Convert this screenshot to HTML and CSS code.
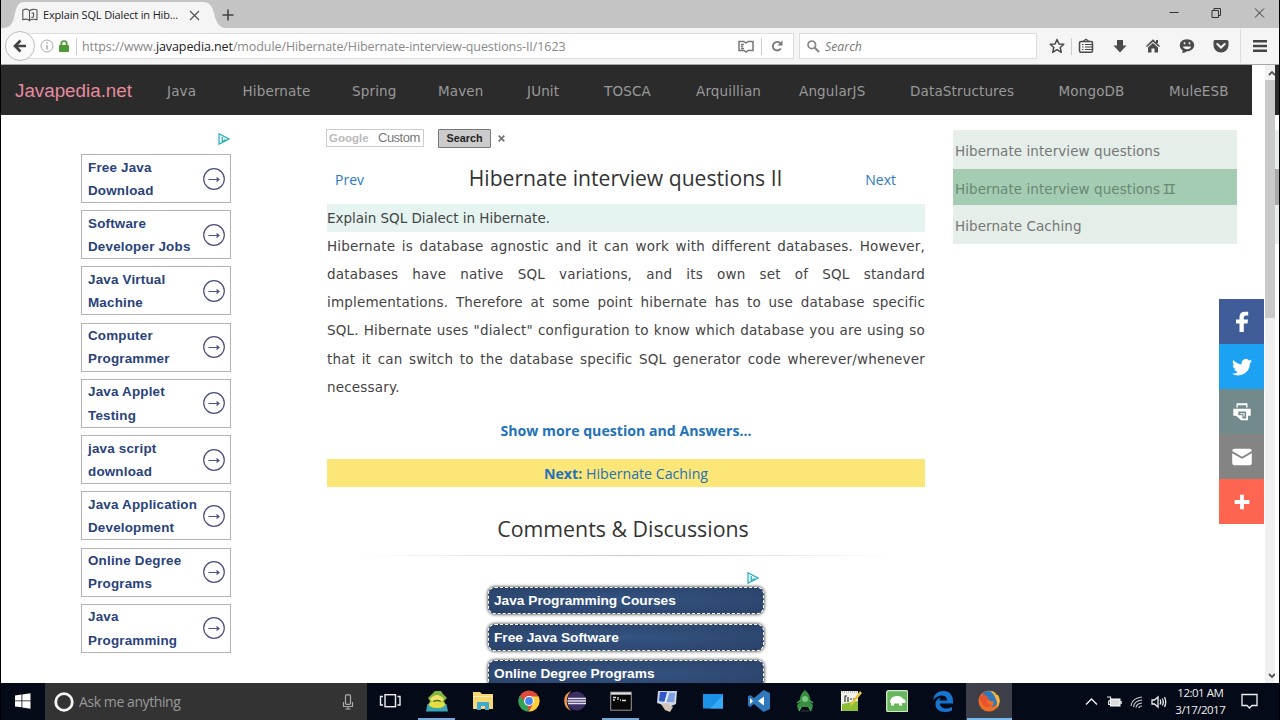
FILE: index.html
```html
<!DOCTYPE html>
<html lang="en">
<head>
<meta charset="utf-8">
<title>Hibernate interview questions II</title>
<link rel="stylesheet" href="styles.css">
</head>
<body>
<div class="screen">
  <header class="tabbar">
    <svg class="tab-shape" width="226" height="29" viewBox="0 0 226 29"><path d="M0 28C10 28 11 22 13 13C15 5 17 2 23 2H200C208 2 210 6 212 13C214 22 217 28 224 28V29H0Z" fill="#f5f5f5"/></svg>
    <div class="tab">
      <svg width="16" height="14" viewBox="0 0 16 14" fill="none" stroke="#555" stroke-width="1.1"><path d="M7.5 12.5C6 11 3 11 .8 11.6V2C3 1 6 1 7.5 2.8C9 1 13 1 15 2V11.6C12 11 9 11 7.5 12.500V3M9.500 5H11.500V8.500Q10.500 10 9.500 9"/></svg>
      <span class="tab-title">Explain SQL Dialect in Hib...</span>
      <svg width="11" height="11" viewBox="0 0 11 11" stroke="#555" stroke-width="1.2"><path d="M1 1L10 10M10 1L1 10"/></svg>
    </div>
    <svg class="newtab" width="12" height="12" viewBox="0 0 12 12" stroke="#444" stroke-width="1.6"><path d="M6 .5V11.500M.5 6H11.500"/></svg>
    <div class="winbtns">
      <svg width="10" height="12" viewBox="0 0 10 12" stroke="#333" fill="none"><path d="M.5 5.500H9.500"/></svg>
      <svg width="11" height="12" viewBox="0 0 11 12" stroke="#333" fill="none"><path d="M1 3.500H7.500V10.500H1ZM3 3.500V1.500H9.500V8.500H7.500"/></svg>
      <svg width="11" height="12" viewBox="0 0 11 12" stroke="#333" fill="none"><path d="M1 1.500L10 10.500M10 1.500L1 10.500"/></svg>
    </div>
  </header>

  <div class="toolbar">
    <div class="back"><svg width="14" height="14" viewBox="0 0 14 14" fill="none" stroke="#444" stroke-width="2.7"><path d="M7.500 1.500L2 7L7.500 12.500M2.500 7H13"/></svg></div>
    <div class="urlbox">
      <svg width="14" height="14" viewBox="0 0 14 14" fill="none" stroke="#aaa"><circle cx="7" cy="7" r="6"/><path d="M7 6V10.500M7 3.300V4.700" stroke-width="1.500"/></svg>
      <svg class="lock" width="10" height="12" viewBox="0 0 10 12"><path d="M2.300 6V3.500Q2.300 1 5 1T7.700 3.500V6" fill="none" stroke="#4a9a30" stroke-width="1.700"/><rect y="5" width="10" height="7" rx="1" fill="#4a9a30"/></svg>
      <i class="vsep"></i>
      <span class="url">https://www.<b>javapedia.net</b>/module/Hibernate/Hibernate-interview-questions-II/1623</span>
      <svg class="reader" width="16" height="13" viewBox="0 0 16 13" fill="none" stroke="#777" stroke-width="1.500"><path d="M1 1.500H6L8 3L10 1.500H15V10.500H10L8 12L6 10.500H1ZM3 4.500H6M3 6.500H5M3 8.500H6" /></svg>
      <i class="vsep"></i>
      <svg class="reload" width="12" height="12" viewBox="0 0 12 12"><path d="M9.500 3.500A4.300 4.300 0 1 0 9.800 8.500" fill="none" stroke="#777" stroke-width="1.800"/><path d="M11.500 .5V5.500H6.500Z" fill="#777"/></svg>
    </div>
    <div class="searchbox">
      <svg width="13" height="13" viewBox="0 0 13 13" fill="none" stroke="#888"><circle cx="4.800" cy="4.800" r="3.800" stroke-width="1.700"/><path d="M7.500 7.500L12 12" stroke-width="2.200"/></svg>
      <span>Search</span>
    </div>
    <div class="tools">
      <svg viewBox="0 0 16 16" fill="none" stroke="#4a4a4a" stroke-width="1.500" stroke-linejoin="round"><path d="M8 1.500L10 6L14.800 6.300L11.200 9.500L12.300 14.300L8 11.700L3.700 14.300L4.800 9.500L1.200 6.300L6 6Z"/></svg>
      <i class="vsep"></i>
      <svg class="list" viewBox="0 0 16 16" fill="none" stroke="#4a4a4a" stroke-width="1.500"><rect x="1.500" y="3.500" width="13" height="10.700" rx="1.500"/><path d="M5.500 3L8 1.300L10.500 3M4 6.500H5.500M7 6.500H14M4 9H5.500M7 9H14M4 11.500H5.500M7 11.500H14" stroke-width="1.200"/></svg>
      <svg viewBox="0 0 16 16" fill="#4a4a4a"><path d="M5 2H11V7.500H14.500L8 14.500L1.500 7.500H5Z"/></svg>
      <svg viewBox="0 0 16 16" fill="#4a4a4a"><path d="M8 1.200L15 8L14 9L8 3.700L2 9L1 8ZM8 5L13 9.500V14.500H9.500V10.500H6.500V14.500H3V9.500ZM11 2H13V5H11Z"/></svg>
      <svg viewBox="0 0 16 16"><path d="M8 1.200C12.500 1.200 15.200 4 15.200 7.300S12 13.300 8 13.300Q6 15 3 15Q4 13.500 3.500 12.300C1.800 11.200 .8 9.500 .8 7.300C.8 4 3.500 1.200 8 1.200Z" fill="#4a4a4a"/><path d="M4 8.500H12Q11.500 11.300 8 11.300T4 8.500" fill="#f5f5f5"/><path d="M5.500 4.300V6.300M10.500 4.300V6.300" stroke="#f5f5f5" stroke-width="1.500"/></svg>
      <svg viewBox="0 0 16 16"><path d="M2 2H14Q15.500 2 15.500 3.500V7C15.500 11.500 12 14.500 8 14.500S.5 11.500.5 7V3.500Q.5 2 2 2Z" fill="#4a4a4a"/><path d="M4.300 6L8 9.500L11.700 6" fill="none" stroke="#f5f5f5" stroke-width="2" stroke-linecap="round"/></svg>
      <i class="vsep tall"></i>
      <svg viewBox="0 0 16 16" stroke="#444" stroke-width="2.500"><path d="M1 3.200H15M1 8H15M1 12.800H15"/></svg>
    </div>
  </div>

  <div class="viewport">
    <div class="page">
      <nav class="nav">
        <span class="brand">Javapedia.net</span>
        <span>Java</span><span>Hibernate</span><span>Spring</span><span>Maven</span><span>JUnit</span><span>TOSCA</span><span>Arquillian</span><span>AngularJS</span><span>DataStructures</span><span>MongoDB</span><span>MuleESB</span>
      </nav>
      <div class="columns">
        <aside class="ads">
          <svg class="choice" width="12" height="12" viewBox="0 0 12 12" fill="#e6fafd" stroke="#28aebc" stroke-width="1.200"><path d="M1 .8L11 6L1 11.200ZM4.300 4V9L7.500 6.500"/></svg>
          <div class="ad"><p>Free Java<br>Download</p><svg class="go" viewBox="0 0 22 22"><circle cx="11" cy="11" r="10.300"/><path d="M5.500 11.500H16M13.500 9.500L16 11.500L13.500 13.500"/></svg></div>
          <div class="ad"><p>Software<br>Developer Jobs</p><svg class="go" viewBox="0 0 22 22"><circle cx="11" cy="11" r="10.300"/><path d="M5.500 11.500H16M13.500 9.500L16 11.500L13.500 13.500"/></svg></div>
          <div class="ad"><p>Java Virtual<br>Machine</p><svg class="go" viewBox="0 0 22 22"><circle cx="11" cy="11" r="10.300"/><path d="M5.500 11.500H16M13.500 9.500L16 11.500L13.500 13.500"/></svg></div>
          <div class="ad"><p>Computer<br>Programmer</p><svg class="go" viewBox="0 0 22 22"><circle cx="11" cy="11" r="10.300"/><path d="M5.500 11.500H16M13.500 9.500L16 11.500L13.500 13.500"/></svg></div>
          <div class="ad"><p>Java Applet<br>Testing</p><svg class="go" viewBox="0 0 22 22"><circle cx="11" cy="11" r="10.300"/><path d="M5.500 11.500H16M13.500 9.500L16 11.500L13.500 13.500"/></svg></div>
          <div class="ad"><p>java script<br>download</p><svg class="go" viewBox="0 0 22 22"><circle cx="11" cy="11" r="10.300"/><path d="M5.500 11.500H16M13.500 9.500L16 11.500L13.500 13.500"/></svg></div>
          <div class="ad"><p>Java Application<br>Development</p><svg class="go" viewBox="0 0 22 22"><circle cx="11" cy="11" r="10.300"/><path d="M5.500 11.500H16M13.500 9.500L16 11.500L13.500 13.500"/></svg></div>
          <div class="ad"><p>Online Degree<br>Programs</p><svg class="go" viewBox="0 0 22 22"><circle cx="11" cy="11" r="10.300"/><path d="M5.500 11.500H16M13.500 9.500L16 11.500L13.500 13.500"/></svg></div>
          <div class="ad"><p>Java<br>Programming</p><svg class="go" viewBox="0 0 22 22"><circle cx="11" cy="11" r="10.300"/><path d="M5.500 11.500H16M13.500 9.500L16 11.500L13.500 13.500"/></svg></div>
        </aside>
        <main class="article">
          <div class="gsearch">
            <div class="ginput"><b>Google</b><span>Custom</span></div>
            <span class="gbtn">Search</span>
            <svg width="7" height="7" viewBox="0 0 7 7" stroke="#777" stroke-width="1.800"><path d="M.7 .7L6.300 6.300M6.300 .7L.7 6.300"/></svg>
          </div>
          <div class="heading"><a>Prev</a><h1>Hibernate interview questions II</h1><a>Next</a></div>
          <div class="question">Explain SQL Dialect in Hibernate.</div>
          <div class="answer">
            <div>Hibernate is database agnostic and it can work with different databases. However,</div>
            <div>databases have native SQL variations, and its own set of SQL standard</div>
            <div>implementations. Therefore at some point hibernate has to use database specific</div>
            <div>SQL. Hibernate uses "dialect" configuration to know which database you are using so</div>
            <div>that it can switch to the database specific SQL generator code wherever/whenever</div>
            <div class="last">necessary.</div>
          </div>
          <div class="more">Show more question and Answers...</div>
          <div class="next"><b>Next:</b> Hibernate Caching</div>
          <h2>Comments &amp; Discussions</h2>
          <div class="rule"></div>
          <div class="links">
            <svg class="choice" width="12" height="12" viewBox="0 0 12 12" fill="#e6fafd" stroke="#28aebc" stroke-width="1.200"><path d="M1 .8L11 6L1 11.200ZM4.300 4V9L7.500 6.500"/></svg>
            <div class="pill"><span>Java Programming Courses</span></div>
            <div class="pill"><span>Free Java Software</span></div>
            <div class="pill"><span>Online Degree Programs</span></div>
          </div>
        </main>
        <aside class="topics">
          <p>Hibernate interview questions</p>
          <p class="current">Hibernate interview questions <span class="numeral">II</span></p>
          <p>Hibernate Caching</p>
        </aside>
      </div>
    </div>
    <div class="scroll">
      <svg width="10" height="15" viewBox="0 0 10 15" fill="none" stroke="#555" stroke-width="1.800"><path d="M4 10L7 7L10 10"/></svg>
      <div class="thumb"></div>
      <svg width="10" height="15" viewBox="0 0 10 15" fill="none" stroke="#555" stroke-width="1.800"><path d="M4 6L7 9L10 6"/></svg>
    </div>
    <div class="edge"><i class="e-nav"></i><i class="e-a"></i><i class="e-b"></i><i class="e-a"></i></div>
    <div class="share">
      <div class="fb"><svg viewBox="0 0 24 24" fill="#fff"><path d="M9.500 22V13.500H6V9.500H9.500V7Q9.500 1.800 15 1.800H18.200V5.500H16Q13.800 5.500 13.800 7.500V9.500H18L17.500 13.500H13.800V22Z"/></svg></div>
      <div class="tw"><svg viewBox="0 0 24 24" fill="#fff"><path d="M23 5.500Q22 6 20.700 6.200Q22 5.300 22.500 3.800Q21.200 4.600 19.600 4.900A4.500 4.500 0 0 0 11.800 9Q6 8.700 2.500 4.300Q.8 7.500 3.900 10.300Q2.800 10.200 1.900 9.700Q2 13.200 5.500 14.200Q4.500 14.500 3.400 14.200Q4.400 17.200 7.700 17.400Q4.800 19.600 1 19.300Q4.200 21.200 7.900 21.200C16 21.200 20.800 14.500 20.600 8Q22.200 6.900 23 5.500Z"/></svg></div>
      <div class="pr"><svg viewBox="0 0 24 24"><path d="M6 2.500H18V7H6ZM2.500 8.500H21.500V16H18.500V21H11L5.500 16H2.500Z" fill="#fff"/><path d="M7.500 4.500H16.500V7.500H7.500ZM8 11.500H16.500V19H12.500V15.500H8Z" fill="#738a8d"/><path d="M10 13H15V17H13.500V14.500H10Z" fill="#d5dcdd"/></svg></div>
      <div class="em"><svg viewBox="0 0 24 24" fill="#fff"><path d="M3.500 3H20.500Q22.500 3 22.700 5.500L12 11.800L1.300 5.500Q1.500 3 3.500 3ZM1.300 8L12 14L22.700 8V18.500Q22.500 21 20.500 21H3.500Q1.500 21 1.300 18.500Z"/></svg></div>
      <div class="pl"><svg viewBox="0 0 24 24" stroke="#fff" stroke-width="4.200"><path d="M12 4V20M4 12H20"/></svg></div>
    </div>
  </div>

  <footer class="taskbar">
    <div class="start"><svg width="16" height="16" viewBox="0 0 16 16" fill="#fff"><path d="M0 2.400L6.500 1.500V7.500H0ZM7.300 1.400L15.500 .2V7.500H7.300ZM0 8.300H6.500V14.300L0 13.400ZM7.300 8.300H15.500V15.700L7.300 14.500Z"/></svg></div>
    <div class="cortana">
      <svg width="20" height="20" viewBox="0 0 20 20" fill="none" stroke="#f4f4f4" stroke-width="2.800"><circle cx="10" cy="10" r="8.300"/></svg>
      <span>Ask me anything</span>
      <svg width="12" height="16" viewBox="0 0 12 16" fill="none" stroke="#aaa" stroke-width="1.200"><rect x="3.500" y=".8" width="5" height="9.500" rx="1"/><path d="M1.500 8V12.500H10.500V8M6 12.500V15M3.500 15H8.500"/></svg>
    </div>
    <div class="apps">
      <div><svg viewBox="0 0 22 22" fill="none" stroke="#eee" stroke-width="1.400"><rect x="6" y="4.700" width="10.500" height="12"/><path d="M4 6.500H1.500V15H4M18.500 6.500H21V15H18.500"/></svg></div>
      <div class="open"><svg viewBox="0 0 22 22"><path d="M0 21.500L1.500 14H20.500L22 21.500Z" fill="#3aa5b5"/><path d="M2 8L6 4L9 1H15L17 4L21 8L18 11L20 15L15 18H7L2 15L4 11Z" fill="#7fb640"/><path d="M4 9Q11 1 18 9L16 12Q11 10 6 12Z" fill="#f0e269"/><ellipse cx="11" cy="14.500" rx="8" ry="3.500" fill="#e6dc45"/><path d="M7 11.500Q11 9.500 15 11.500" fill="none" stroke="#4f7b28" stroke-width="1.300"/></svg></div>
      <div><svg viewBox="0 0 22 22"><path d="M1 2H8L10 4H21V19H1Z" fill="#f8d775"/><path d="M1 6H21V7H1Z" fill="#fff0aa"/><path d="M5 20V13Q5 12 6 12H16Q17 12 17 13V20H13V16H9V20Z" fill="#3fa9d0"/></svg></div>
      <div><svg viewBox="0 0 22 22"><circle cx="11" cy="11" r="10.500" fill="#e04a3a"/><path d="M2 5.500L8.500 15L11.500 21.500A10.500 10.500 0 0 1 2 5.500Z" fill="#2fa457"/><path d="M11 6.500H20.500A10.500 10.500 0 0 1 11 21.500L15.500 13Z" fill="#fbd03b"/><circle cx="11" cy="11" r="5" fill="#fff"/><circle cx="11" cy="11" r="3.900" fill="#4188ec"/></svg></div>
      <div><svg viewBox="0 0 22 22"><path d="M7.500 1A10.500 10.500 0 0 0 7.500 21A13 13 0 0 1 7.500 1Z" fill="#eb9a4a"/><circle cx="12.500" cy="11" r="9.500" fill="#3c2f62"/><path d="M4 8.500H22M3.500 11H22M4 13.500H22" stroke="#e4e0ef" stroke-width="1.500"/></svg></div>
      <div class="open"><svg viewBox="0 0 22 22"><rect x=".7" y="2.200" width="20.600" height="18" fill="#080808" stroke="#999"/><path d="M1 3.500H21" stroke="#ddd" stroke-width="2.400"/><path d="M3 7.500H6M3 10H5M8 7V10M10 10H11M12 10.500H16" stroke="#ddd" stroke-width="1.300"/></svg></div>
      <div><svg viewBox="0 0 22 22"><path d="M2 1L21 1L20 14L13 17L1 13Z" fill="#cbd4e5"/><path d="M4 2L11 2L10 12L3 11Z" fill="#3357c7"/><path d="M13 3H19L18 12H10Z" fill="#7f9fe4"/><path d="M11 3H13L10 13H8Z" fill="#eef"/><path d="M5 14L10 13L17 17L14 22L9 20Z" fill="#d3c4b6"/></svg></div>
      <div><svg viewBox="0 0 22 22"><rect x="1" y="4" width="20" height="14.500" fill="#1c91e8"/><path d="M8 18.500L21 5V18.500Z" fill="#35aaf5"/></svg></div>
      <div><svg viewBox="0 0 22 22"><path d="M15.500 0L22 3V19L15.500 22L6 14L2 17L0 15.500V6.500L2 5L6 8Z" fill="#2f78bd"/><path d="M2 8V14L5 11ZM16 6.500V15.500L10 11Z" fill="#fff"/></svg></div>
      <div><svg viewBox="0 0 22 22"><path d="M11 0Q17 5 16 12L19 15L18 20L14 17H8L4 20L3 15L6 12Q5 5 11 0Z" fill="#388e42"/><path d="M3 13L7 10M15 10L19 13M7 17L5 21M15 17L17 21" stroke="#4ca958" stroke-width="1.500"/><circle cx="11" cy="9" r="3" fill="#79c77e"/><path d="M7 21H15" stroke="#3b3b3b"/></svg></div>
      <div><svg viewBox="0 0 22 22"><path d="M1 1H18V21H1Z" fill="#f1f1e8"/><path d="M2 14L18 11V21H2Z" fill="#8bbf36"/><path d="M2 2H17" stroke="#999" stroke-dasharray="1 1"/><path d="M5 12V6H7M8 7V12M10 9H12M13 9H15" stroke="#333" stroke-width="1.200" fill="none"/><path d="M20 1L11 13L10 17L13 14L22 3Z" fill="#e9c243"/></svg></div>
      <div><svg viewBox="0 0 22 22"><rect x=".7" y=".7" width="21" height="21" rx="1.500" fill="#68b75e" stroke="#cde9c7" stroke-width="1.300"/><path d="M4 13Q4 6 11 6Q16 6 17 9Q20 9 19.500 13H16V15.500H13V13.500H8V15.500H5V13Z" fill="#fff"/></svg></div>
      <div><svg viewBox="0 0 22 22"><path d="M1 10C2 4 6 1 11.500 1C18 1 21 6 21 11V13.500H8C8 17 11 18.500 14 18.500Q17 18.500 20 17V20.500Q17 22 13 22C7 22 3.500 18.500 3.500 14C3.500 10.500 6 8.500 9 7.500Q7.500 9 7.500 10.500H15Q15 6 10.500 5.500Q5 5.300 1 10Z" fill="#1675cf"/></svg></div>
      <div class="open active"><svg viewBox="0 0 22 22"><circle cx="11" cy="11" r="10.500" fill="#ee7024"/><path d="M4 4Q9 -1 15 1.500Q21 5 19.500 12Q18 17 13 17Q17 14 15 11Q12 12 10 9Q10 6 7 6Z" fill="#2e79bd"/><path d="M12 1Q17 1 18 5L20 5Q24 12 19 18Q20 12 17 7Q15 3 12 1Z" fill="#f8b63a"/><path d="M2 5L4 6L7 4L8 7L11 9L9 11Q9 15 14 14Q11 19 6 16Q1 12 2 5Z" fill="#e8532d"/></svg></div>
    </div>
    <div class="tray">
      <svg width="13" height="14" viewBox="0 0 13 14" fill="none" stroke="#eee" stroke-width="1.400"><path d="M1 9.500L6.500 4L12 9.500"/></svg>
      <svg width="16" height="14" viewBox="0 0 16 14"><rect x="4.500" y="4" width="9.500" height="7" fill="#ddd" stroke="#fff"/><path d="M15 6V9" stroke="#eee" stroke-width="1.500"/><path d="M1 2H4.500V4.500Q4 6 2.700 6.200V9.500H4" fill="none" stroke="#eee" stroke-width="1.200"/></svg>
      <svg width="13" height="14" viewBox="0 0 13 14" fill="none" stroke="#ccc" stroke-width="1.200"><path d="M1 11Q2 3 12 2M3.500 12Q4 6 12 5M6 12.500Q6.500 8.500 12 8M9 13Q9 11 12 11"/></svg>
      <svg width="16" height="14" viewBox="0 0 16 14" fill="none" stroke="#eee" stroke-width="1.300"><path d="M1 5H3.500L7 2V12L3.500 9H1ZM9 4.500Q10.500 7 9 9.500M11.300 3.500Q13.300 7 11.300 10.500M13.500 2Q16 7 13.500 12"/></svg>
      <div class="clock"><span>12:01 AM</span><span>3/17/2017</span></div>
      <svg width="17" height="17" viewBox="0 0 17 17" fill="none" stroke="#eee" stroke-width="1.300"><path d="M1 1.500H16V12.500H11L8.500 15L6 12.500H1Z"/></svg>
    </div>
  </footer>
</div>
</body>
</html>
```
FILE: styles.css
```css
* { box-sizing: border-box; }
body { margin: 0; background: #000; }
h1, h2, p { margin: 0; font-weight: 400; }
svg { display: block; flex: none; }
.screen {
  width: 1280px; height: 720px; overflow: hidden;
  display: grid; grid-template-rows: 28px 37px 618px 37px;
  border-left: 1px solid #000; border-right: 1px solid #000;
  white-space: nowrap; background: #fff;
}

/* browser chrome */
.tabbar { position: relative; display: flex; align-items: center; background: #c4c4c4; padding-left: 21px; font: 11px/14px "Open Sans", sans-serif; }
.tab-shape { position: absolute; left: 1px; top: 0; }
.tab { position: relative; display: flex; align-items: center; width: 178px; padding-top: 2px; }
.tab-title { width: 147px; padding-left: 5px; color: #222; letter-spacing: -.16px; }
.tab svg:last-child { margin-left: 5px; }
.newtab { position: relative; margin: 2px 0 0 22px; }
.winbtns { display: flex; gap: 32px; margin: -2px 0 0 auto; padding-right: 15px; }
.tabbar .winbtns { padding-right: 15px; margin-right: 6.500px; }
.toolbar { display: flex; align-items: center; background: #f5f5f5; border-bottom: 1px solid #a8a8a8; font: 12.5px/16px "Open Sans", sans-serif; }
.back { display: flex; align-items: center; justify-content: center; width: 30px; height: 30px; margin: -1px 0 0 4px; border: 1px solid #bbb; border-radius: 50%; background: #fbfbfb; position: relative; z-index: 1; }
.urlbox, .searchbox { display: flex; align-items: center; height: 26px; background: #fff; border: 1px solid #ddd; }
.urlbox { width: 768px; margin-left: -9px; padding-left: 13px; }
.lock { margin-left: 5px; }
.vsep { width: 1px; height: 17px; background: #ccc; }
.urlbox .vsep { margin-left: 7px; }
.url { width: 661px; padding-left: 5px; color: #888; letter-spacing: -.09px; padding-top: 2px; }
.url b { font-weight: 400; color: #222; }
.reload { margin-left: 9px; }
.searchbox { width: 238px; margin-left: 5px; padding-left: 7px; gap: 5px; color: #777; font-style: italic; font-size: 12.3px; }
.searchbox span { padding-top: 2px; }
.tools { display: flex; align-items: center; margin-left: 12px; }
.tools svg { width: 16px; height: 16px; margin-right: 17.700px; }
.tools svg:first-child { margin-right: 6px; }
.tools .vsep { margin-right: 6px; }
.tools .tall { height: 34px; margin: 0 11px 0 -6px; background: #ddd; }

/* page */
.viewport { position: relative; display: grid; grid-template-columns: 1264px 10px 4px; overflow: hidden; }
.page { height: 618px; overflow: hidden; }
.nav {
  display: grid; width: 1251px; height: 50px; align-items: center; background: #2b2b2c; color: #999;
  grid-template-columns: 152px 75.500px 109.500px 86px 89px 77px 92px 103px 111px 148.500px 110.500px auto;
  padding: 1px 0 0 14px; font: 13.500px/20px "DejaVu Sans", sans-serif; letter-spacing: .15px;
}
.brand { color: #e58a9d; font: 18.800px/24px "Liberation Sans", sans-serif; letter-spacing: 0; }
.columns { display: grid; grid-template-columns: 150px 96px 598px 28px 284px; padding-left: 80px; }
.ads { grid-column: 1; padding-top: 18px; }
.article { grid-column: 3; padding-top: 13px; }
.topics { grid-column: 5; padding-top: 15px; }
.ads .choice { margin: 0 1px 9px auto; }
.ad { display: flex; align-items: center; justify-content: space-between; height: 49px; margin-bottom: 7.220px; padding: 0 5px 0 6px; border: 1px solid #b3b3b3; }
.ad p { font: bold 13.400px/23.300px "Liberation Sans", sans-serif; letter-spacing: .2px; color: #29427a; padding-top: .6px; }
.go { width: 22px; height: 22px; fill: none; stroke: #4b4f80; stroke-width: 1.200; }

.gsearch { display: flex; align-items: center; height: 20px; margin-left: -1px; }
.ginput { display: flex; align-items: center; width: 98px; height: 18px; padding-left: 2px; border: 1px solid #ccc; font: 13px/16px "Liberation Sans", sans-serif; color: #777; }
.ginput b { width: 49px; font: bold 11.500px/16px "Liberation Sans", sans-serif; color: #bbb; }
.ginput span { letter-spacing: -.5px; }
.gbtn { width: 53px; height: 19px; margin: 0 7px 0 14px; border: 1px solid #777; border-radius: 1px; background: #ccc; font: bold 10.800px/17px "Liberation Sans", sans-serif; text-align: center; color: #222; }
.heading { display: flex; justify-content: space-between; align-items: center; height: 56px; padding: 7px 29px 0 8px; font: 14px/20px "Open Sans", sans-serif; color: #2a7abf; }
.heading h1 { font: 21.150px/28px "Open Sans", sans-serif; color: #333; padding-left: 22px; margin-top: -4px; }
.question, .answer { font: 13.500px/28px "DejaVu Sans", sans-serif; color: #444; }
.question { background: #e5f4f1; letter-spacing: -.02px; }
.answer { letter-spacing: .18px; }
.answer div { height: 28.150px; text-align-last: justify; }
.answer .last { text-align-last: left; }
.more { margin-top: 16px; text-align: center; font: bold 14.150px/28px "Open Sans", sans-serif; color: #2372b9; }
.next { margin-top: 14.300px; height: 28px; background: #fde678; text-align: center; font: 14.200px/30px "Open Sans", sans-serif; color: #2372b9; }
h2 { margin-top: 26px; padding-right: 6px; text-align: center; font: 21.350px/31px "Open Sans", sans-serif; color: #333; margin-bottom: 11px; }
.rule { height: 1px; background: linear-gradient(90deg, #fff 5%, #ccc 50%, #fff 95%); }
.links { width: 276px; margin: 16px 0 0 161px; }
.links .choice { margin: 0 5px 3px auto; }
.pill { height: 27px; margin-bottom: 9.500px; padding: 0 5px; border: 1px dashed #fff; border-radius: 7px; background: radial-gradient(#345482, #2a4269); box-shadow: 0 0 3px 1px #777; color: #fff; font: bold 13.700px/25px "Liberation Sans", sans-serif; }
.topics { font: 13.500px/20px "DejaVu Sans", sans-serif; letter-spacing: .07px; color: #777; }
.topics p { height: 39px; padding: 11px 2px 0; background: #e5eee8; }
.topics .current { height: 36px; padding-top: 10px; background: #a4ccb2; color: #688875; }
.numeral { font-family: "DejaVu Sans Mono", monospace; letter-spacing: -2.500px; margin-left: -2px; }
.scroll { display: flex; flex-direction: column; background: #f0f0f0; }
.thumb { height: 238px; margin-bottom: auto; background: #c9c9c9; }
.edge { background: #fff; }
.edge i { display: block; }
.e-nav { height: 50px; background: #2b2b2c; margin-bottom: 15px; }
.e-a { height: 39px; background: #e8ecea; }
.e-b { height: 36px; background: #aaa; }
.share { position: absolute; left: 1218px; top: 234px; }
.share div { display: flex; align-items: center; justify-content: center; width: 45px; height: 45px; }
.share svg { width: 22px; height: 22px; }
.fb { background: #3f5b98; }
.tw { background: #1da1f2; }
.pr { background: #738a8d; }
.em { background: #848484; }
.pl { background: #ff6550; }
.share .fb svg { width: 24px; height: 24px; }
.share .em svg { width: 24px; height: 22px; }

/* taskbar */
.taskbar { display: flex; background: #050a18; color: #eee; }
.start { display: flex; align-items: center; justify-content: center; width: 44px; padding-bottom: 1px; }
.cortana { display: flex; align-items: center; width: 322px; padding-left: 9px; background: #333; color: #999; font: 14px/20px "Open Sans", sans-serif; }
.cortana span { width: 268px; padding-left: 5px; letter-spacing: -.42px; }
.apps { display: flex; }
.apps div { display: flex; align-items: center; justify-content: center; width: 46.050px; padding-bottom: 1px; }
.apps div svg { width: 22px; height: 22px; }
.apps div:first-child { width: 46.500px; }
.open { background: linear-gradient(#76a9d8, #76a9d8) center bottom / 37px 2px no-repeat; }
.apps .active { background: linear-gradient(#76b9ed, #76b9ed) center bottom / 45px 2px no-repeat, #3d4049; }
.tray { display: flex; align-items: center; margin-left: 73px; gap: 7.800px; }
.clock { display: flex; flex-direction: column; width: 50px; align-items: center; font: 11.500px/17px "Open Sans", sans-serif; letter-spacing: -.5px; margin: -2px 8px 0 1px; }
```
